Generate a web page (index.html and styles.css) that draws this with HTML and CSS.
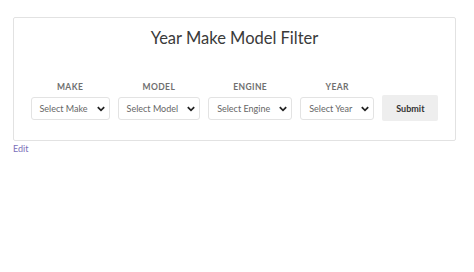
FILE: index.html
```html
<!DOCTYPE html>
<html lang="en">
<head>
    <meta charset="UTF-8">
    <title>Year Make Model Filter</title>
    <link rel="stylesheet" href="styles.css">
</head>
<body>
    <div class="filter-card">
        <h2>Year Make Model Filter</h2>
        <form class="filter-row">
            <div class="field">
                <span class="field-label">Make</span>
                <div class="select-box"><span>Select Make</span>
                    <svg class="chev" viewBox="0 0 10 7" width="8" height="6"><path d="M1 1.2 L5 5.2 L9 1.2" fill="none" stroke="#222" stroke-width="2.2"/></svg>
                </div>
            </div>
            <div class="field">
                <span class="field-label">Model</span>
                <div class="select-box"><span>Select Model</span>
                    <svg class="chev" viewBox="0 0 10 7" width="8" height="6"><path d="M1 1.2 L5 5.2 L9 1.2" fill="none" stroke="#222" stroke-width="2.2"/></svg>
                </div>
            </div>
            <div class="field">
                <span class="field-label">Engine</span>
                <div class="select-box"><span>Select Engine</span>
                    <svg class="chev" viewBox="0 0 10 7" width="8" height="6"><path d="M1 1.2 L5 5.2 L9 1.2" fill="none" stroke="#222" stroke-width="2.2"/></svg>
                </div>
            </div>
            <div class="field">
                <span class="field-label">Year</span>
                <div class="select-box"><span>Select Year</span>
                    <svg class="chev" viewBox="0 0 10 7" width="8" height="6"><path d="M1 1.2 L5 5.2 L9 1.2" fill="none" stroke="#222" stroke-width="2.2"/></svg>
                </div>
            </div>
            <button type="button" class="submit-btn">Submit</button>
        </form>
    </div>
    <a class="edit-link" href="#">Edit</a>
</body>
</html>
```

FILE: styles.css
```css
body {
    font-family: Lato, "Open Sans", sans-serif;
    margin: 17px 18px 0 13px;
    background: #fff;
    color: #333;
}

.filter-card {
    border: 1px solid #e2e2e2;
    border-radius: 2px;
    padding: 8px 0 20px;
}

h2 {
    margin: 0;
    text-align: center;
    font-weight: 400;
    font-size: 16.5px;
    line-height: 24px;
    color: #3a3a3a;
}

.filter-row {
    display: flex;
    justify-content: center;
    align-items: flex-end;
    gap: 8px;
    margin-top: 32px;
}

.field {
    display: flex;
    flex-direction: column;
    align-items: center;
}

.field-label {
    font-size: 8.5px;
    font-weight: 700;
    text-transform: uppercase;
    letter-spacing: 0.4px;
    color: #6f6f6f;
    line-height: 11px;
    margin-bottom: 4px;
}

.select-box {
    display: flex;
    align-items: center;
    height: 21px;
    padding: 0 4px 0 8px;
    border: 1px solid #e3e3e3;
    border-radius: 3px;
    font-size: 9px;
    color: #666;
    white-space: nowrap;
}

.select-box .chev {
    margin-left: 9px;
}

.submit-btn {
    height: 26px;
    margin-bottom: -1px;
    padding: 0 14px;
    border: none;
    border-radius: 2px;
    background: #eeeeee;
    font-family: inherit;
    font-size: 9px;
    font-weight: 700;
    color: #333;
    white-space: nowrap;
}

.edit-link {
    display: block;
    margin-top: 2px;
    font-size: 9px;
    line-height: 11px;
    color: #7b6fb8;
    text-decoration: none;
}
```
